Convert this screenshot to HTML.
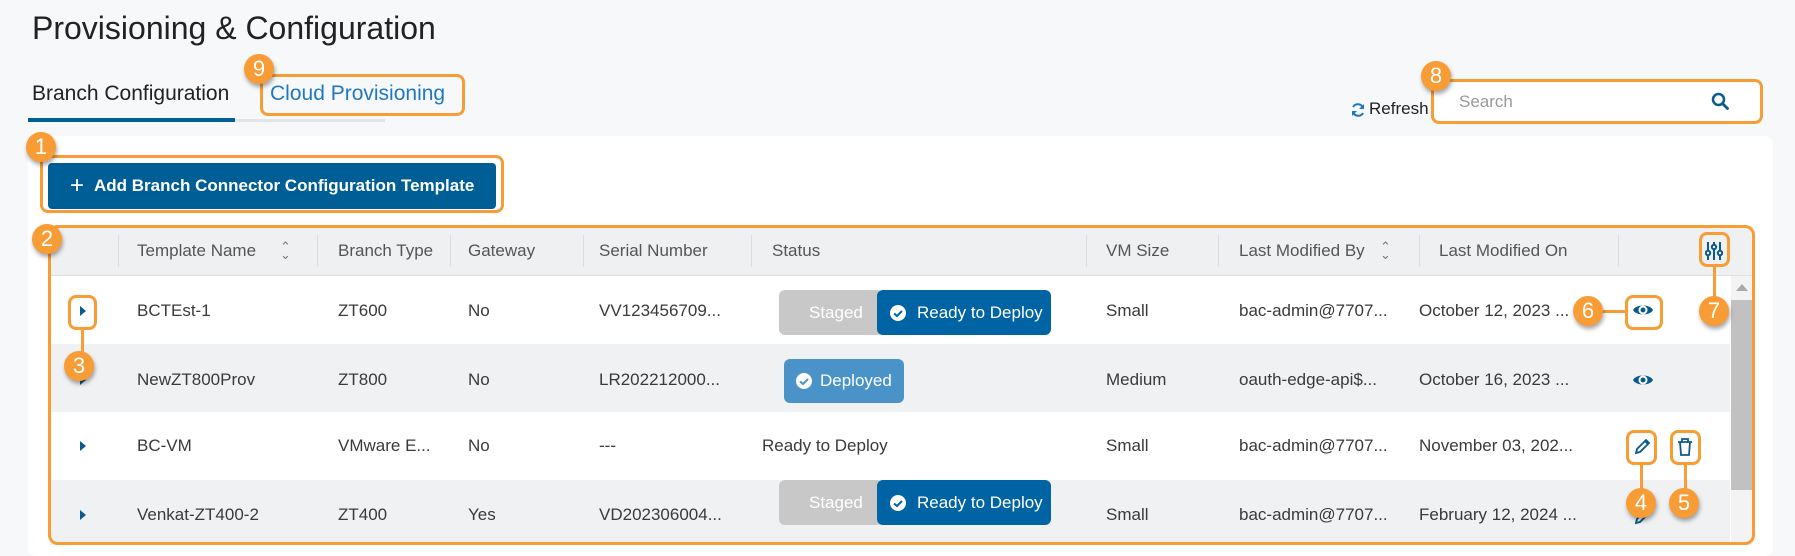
<!DOCTYPE html>
<html><head><meta charset="utf-8"><style>
*{margin:0;padding:0;box-sizing:border-box}
body{width:1795px;height:546px;background:#f7f8fa;font-family:"Liberation Sans",sans-serif;position:relative;overflow:hidden;color:#333}
.a{position:absolute}
.t{position:absolute;font-size:17px;color:#3a3a3a;white-space:nowrap;transform:translateY(-50%)}
.h{position:absolute;font-size:17px;color:#555;white-space:nowrap;transform:translateY(-50%);top:251px}
.ob{position:absolute;border:3px solid #f89c35;border-radius:8px}
.c{position:absolute;width:30px;height:30px;border-radius:50%;background:#f89c35;color:#fff;font-size:22px;text-align:center;line-height:30px;box-shadow:1px 3px 4px rgba(0,0,0,.35);transform:translate(-50%,-50%);z-index:5}
.sep{position:absolute;top:235px;width:1px;height:32px;background:#dcdde0}
.tri{position:absolute;width:0;height:0;border-top:5px solid transparent;border-bottom:5px solid transparent;border-left:6px solid #0b5a8e}
.ln{position:absolute;background:#f89c35}
</style></head><body>
<div class="a" style="left:32px;top:10px;font-size:32px;color:#222">Provisioning &amp; Configuration</div>
<div class="a" style="left:32px;top:82px;font-size:21px;color:#222">Branch Configuration</div>
<div class="a" style="left:270px;top:82px;font-size:21px;color:#1f78c1">Cloud Provisioning</div>
<div class="a" style="left:28px;top:119px;width:357px;height:3px;background:#e2e4e8"></div>
<div class="a" style="left:28px;top:118px;width:207px;height:4px;background:#005e96"></div>
<div class="ob" style="left:260px;top:74px;width:205px;height:42px"></div>
<div class="c" style="left:259px;top:69px">9</div>

<svg class="a" style="left:1350px;top:102px" width="16" height="16" viewBox="0 0 16 16"><path d="M13 6A5.5 5.5 0 0 0 3 5M3 10a5.5 5.5 0 0 0 10 1" fill="none" stroke="#1f78c1" stroke-width="2"/><path d="M14 2v5h-5zM2 14V9h5z" fill="#1f78c1"/></svg>
<div class="a" style="left:1369px;top:99px;font-size:17px;color:#222">Refresh</div>
<div class="a" style="left:1433px;top:81px;width:328px;height:41px;background:#fff;border-radius:6px"></div>
<div class="ob" style="left:1431px;top:79px;width:332px;height:45px"></div>
<div class="a" style="left:1459px;top:92px;font-size:17px;color:#999">Search</div>
<svg class="a" style="left:1711px;top:92px" width="18" height="18" viewBox="0 0 18 18"><circle cx="7.5" cy="7.5" r="5.5" fill="none" stroke="#0b5a8e" stroke-width="2.5"/><path d="M11.5 11.5l5 5" stroke="#0b5a8e" stroke-width="2.8" stroke-linecap="round"/></svg>
<div class="c" style="left:1436px;top:76px">8</div>

<div class="a" style="left:28px;top:136px;width:1745px;height:420px;background:#fff;border-radius:8px"></div>
<div class="a" style="left:48px;top:163px;width:448px;height:46px;background:#005e96;border-radius:4px;color:#fff;font-weight:bold;font-size:17px;line-height:46px;padding-left:22px"><span style="font-size:24px;font-weight:normal;vertical-align:-2px;margin-right:10px">+</span>Add Branch Connector Configuration Template</div>
<div class="ob" style="left:40px;top:155px;width:464px;height:58px"></div>
<div class="c" style="left:41px;top:147px">1</div>

<div class="a" style="left:50px;top:227px;width:1703px;height:49px;background:#eff0f2"></div>
<div class="a" style="left:50px;top:275px;width:1703px;height:1px;background:#dcdde0"></div>
<div class="a" style="left:50px;top:344px;width:1680px;height:68px;background:#f0f1f3"></div>
<div class="a" style="left:50px;top:480px;width:1680px;height:65px;background:#f0f1f3"></div>
<div class="sep" style="left:118px"></div><div class="sep" style="left:317px"></div><div class="sep" style="left:450px"></div><div class="sep" style="left:583px"></div><div class="sep" style="left:751px"></div><div class="sep" style="left:1086px"></div><div class="sep" style="left:1218px"></div><div class="sep" style="left:1419px"></div><div class="sep" style="left:1618px"></div>
<div class="h" style="left:137px">Template Name</div>
<div class="h" style="left:280px;font-size:13px;line-height:8px;color:#777">⌃<br>⌄</div>
<div class="h" style="left:338px">Branch Type</div>
<div class="h" style="left:468px">Gateway</div>
<div class="h" style="left:599px">Serial Number</div>
<div class="h" style="left:772px">Status</div>
<div class="h" style="left:1106px">VM Size</div>
<div class="h" style="left:1239px">Last Modified By</div>
<div class="h" style="left:1380px;font-size:13px;line-height:8px;color:#777">⌃<br>⌄</div>
<div class="h" style="left:1439px">Last Modified On</div>
<svg class="a" style="left:1705px;top:241px" width="18" height="20" viewBox="0 0 18 20"><g stroke="#0b5a8e" stroke-width="2" fill="#fff"><path d="M3 1v18M9 1v18M15 1v18"/><circle cx="3" cy="12" r="2.2"/><circle cx="9" cy="6" r="2.2"/><circle cx="15" cy="12" r="2.2"/></g></svg>
<div class="ob" style="left:1699px;top:232px;width:31px;height:35px"></div>

<div class="a" style="left:1731px;top:276px;width:22px;height:269px;background:#f3f3f3"></div>
<div class="a" style="left:1736px;top:284px;width:0;height:0;border-left:6px solid transparent;border-right:6px solid transparent;border-bottom:7px solid #aaa"></div>
<div class="a" style="left:1731px;top:300px;width:21px;height:190px;background:#c1c1c1"></div>

<div class="tri" style="left:80px;top:306px"></div>
<div class="tri" style="left:80px;top:375px"></div>
<div class="tri" style="left:80px;top:441px"></div>
<div class="tri" style="left:80px;top:510px"></div>
<div class="t" style="left:137px;top:311px">BCTEst-1</div>
<div class="t" style="left:338px;top:311px">ZT600</div>
<div class="t" style="left:468px;top:311px">No</div>
<div class="t" style="left:599px;top:311px">VV123456709...</div>
<div class="t" style="left:1106px;top:311px">Small</div>
<div class="t" style="left:1239px;top:311px">bac-admin@7707...</div>
<div class="t" style="left:1419px;top:311px">October 12, 2023 ...</div>

<div class="t" style="left:137px;top:380px">NewZT800Prov</div>
<div class="t" style="left:338px;top:380px">ZT800</div>
<div class="t" style="left:468px;top:380px">No</div>
<div class="t" style="left:599px;top:380px">LR202212000...</div>
<div class="t" style="left:1106px;top:380px">Medium</div>
<div class="t" style="left:1239px;top:380px">oauth-edge-api$...</div>
<div class="t" style="left:1419px;top:380px">October 16, 2023 ...</div>

<div class="t" style="left:137px;top:446px">BC-VM</div>
<div class="t" style="left:338px;top:446px">VMware E...</div>
<div class="t" style="left:468px;top:446px">No</div>
<div class="t" style="left:599px;top:446px">---</div>
<div class="t" style="left:762px;top:446px">Ready to Deploy</div>
<div class="t" style="left:1106px;top:446px">Small</div>
<div class="t" style="left:1239px;top:446px">bac-admin@7707...</div>
<div class="t" style="left:1419px;top:446px">November 03, 202...</div>

<div class="t" style="left:137px;top:515px">Venkat-ZT400-2</div>
<div class="t" style="left:338px;top:515px">ZT400</div>
<div class="t" style="left:468px;top:515px">Yes</div>
<div class="t" style="left:599px;top:515px">VD202306004...</div>
<div class="t" style="left:1106px;top:515px">Small</div>
<div class="t" style="left:1239px;top:515px">bac-admin@7707...</div>
<div class="t" style="left:1419px;top:515px">February 12, 2024 ...</div>

<div class="a" style="left:779px;top:290px;width:104px;height:45px;background:#c8c8c8;border-radius:6px;color:#fff;font-size:17px;line-height:45px;padding-left:30px">Staged</div>
<div class="a" style="left:877px;top:290px;width:174px;height:45px;background:#0063a3;border-radius:6px;color:#fff;font-size:17px;line-height:45px;padding-left:40px">Ready to Deploy</div>
<svg class="a" style="left:889px;top:304px" width="18" height="18"><circle cx="9" cy="9" r="8" fill="#fff"/><path d="M5 9.5l3 2.5 5-5" fill="none" stroke="#0063a3" stroke-width="2"/></svg>
<div class="a" style="left:784px;top:359px;width:120px;height:44px;background:#4a93c8;border-radius:6px;color:#fff;font-size:17px;line-height:44px;padding-left:36px">Deployed</div>
<svg class="a" style="left:795px;top:372px" width="18" height="18"><circle cx="9" cy="9" r="8" fill="#fff"/><path d="M5 9.5l3 2.5 5-5" fill="none" stroke="#4a93c8" stroke-width="2"/></svg>
<div class="a" style="left:779px;top:480px;width:104px;height:45px;background:#c8c8c8;border-radius:6px;color:#fff;font-size:17px;line-height:45px;padding-left:30px">Staged</div>
<div class="a" style="left:877px;top:480px;width:174px;height:45px;background:#0063a3;border-radius:6px;color:#fff;font-size:17px;line-height:45px;padding-left:40px">Ready to Deploy</div>
<svg class="a" style="left:889px;top:494px" width="18" height="18"><circle cx="9" cy="9" r="8" fill="#fff"/><path d="M5 9.5l3 2.5 5-5" fill="none" stroke="#0063a3" stroke-width="2"/></svg>

<svg class="a" style="left:1632px;top:302px" width="22" height="16" viewBox="0 0 22 16"><path d="M1 8C4 2 18 2 21 8C18 14 4 14 1 8z" fill="#0b5a8e"/><circle cx="11" cy="8" r="4.5" fill="#fff"/><circle cx="11" cy="8" r="2.5" fill="#0b5a8e"/></svg>
<svg class="a" style="left:1632px;top:372px" width="22" height="16" viewBox="0 0 22 16"><path d="M1 8C4 2 18 2 21 8C18 14 4 14 1 8z" fill="#0b5a8e"/><circle cx="11" cy="8" r="4.5" fill="#fff"/><circle cx="11" cy="8" r="2.5" fill="#0b5a8e"/></svg>
<svg class="a" style="left:1633px;top:438px" width="18" height="18" viewBox="0 0 18 18"><path d="M3 15l1-4 9-9 3 3-9 9zM12 3l3 3" fill="none" stroke="#0b5a8e" stroke-width="1.8"/></svg>
<svg class="a" style="left:1633px;top:508px" width="18" height="18" viewBox="0 0 18 18"><path d="M3 15l1-4 9-9 3 3-9 9z" fill="none" stroke="#0b5a8e" stroke-width="1.8"/></svg>
<svg class="a" style="left:1676px;top:437px" width="18" height="20" viewBox="0 0 18 20"><path d="M2 5h14M6 5V2h6v3M4 5l1 13h8l1-13" fill="none" stroke="#0b5a8e" stroke-width="1.8"/></svg>
<div class="ob" style="left:1625px;top:295px;width:38px;height:35px"></div>
<div class="ob" style="left:1626px;top:430px;width:31px;height:35px"></div>
<div class="ob" style="left:1670px;top:430px;width:31px;height:35px"></div>
<div class="ob" style="left:68px;top:295px;width:29px;height:35px"></div>

<div class="ob" style="left:48px;top:225px;width:1707px;height:320px;border-radius:10px"></div>
<div class="c" style="left:47px;top:239px">2</div>

<div class="ln" style="left:81px;top:330px;width:3px;height:22px"></div>
<div class="c" style="left:79px;top:366px">3</div>
<div class="ln" style="left:1640px;top:465px;width:3px;height:26px"></div>
<div class="c" style="left:1641px;top:503px">4</div>
<div class="ln" style="left:1684px;top:465px;width:3px;height:26px"></div>
<div class="c" style="left:1684px;top:503px">5</div>
<div class="ln" style="left:1600px;top:310px;width:25px;height:3px"></div>
<div class="c" style="left:1588px;top:311px">6</div>
<div class="ln" style="left:1713px;top:267px;width:3px;height:30px"></div>
<div class="c" style="left:1714px;top:311px">7</div>
</body></html>
